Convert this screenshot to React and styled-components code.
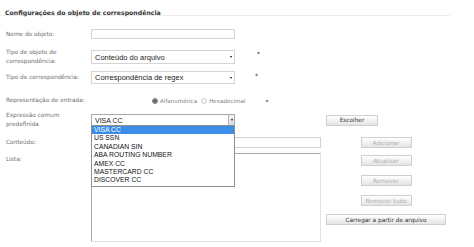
import React from 'react';
import styled, { createGlobalStyle } from 'styled-components';

const GlobalStyle = createGlobalStyle`
  body {
    margin: 0;
    background: #ffffff;
  }
`;

const Page = styled.div`
  width: 474px;
  height: 247px;
  position: relative;
  font-family: "DejaVu Sans", Tahoma, sans-serif;
  color: #707070;
  overflow: hidden;
`;

const Header = styled.div`
  width: 450px;
  height: 16px;
  box-sizing: border-box;
  padding: 9px 0 0 5px;
  border-bottom: 1px solid #ececec;
  font-size: 6.2px;
  line-height: 7px;
  font-weight: bold;
  color: #333333;
`;

const Form = styled.div`
  padding-left: 6px;
`;

const Row = styled.div`
  display: flex;
  align-items: ${p => p.$align || 'center'};
  margin-top: ${p => p.$mt}px;
`;

const Label = styled.div`
  width: 85px;
  flex: none;
  font-size: 5.8px;
  line-height: 9px;
  padding-top: ${p => p.$pt || 0}px;
`;

const TextInput = styled.div`
  width: ${p => p.$w}px;
  height: ${p => p.$h}px;
  box-sizing: border-box;
  border: 1px solid #d4d4d4;
  background: #ffffff;
`;

const SelectBox = styled.div`
  position: relative;
  width: 144px;
  height: ${p => p.$h}px;
  box-sizing: border-box;
  border: 1px solid ${p => (p.$open ? '#a9a9a9' : '#d4d4d4')};
  background: #ffffff;
  display: flex;
  align-items: center;
  padding-left: 3px;
  font-family: "Liberation Sans", Arial, sans-serif;
  font-size: ${p => (p.$open ? 7 : 7.5)}px;
  color: #222222;
`;

const SelectValue = styled.span`
  flex: 1;
  white-space: nowrap;
`;

const Caret = styled.span`
  width: 0;
  height: 0;
  border-left: 1.6px solid transparent;
  border-right: 1.6px solid transparent;
  border-top: 2.4px solid #111111;
  margin-right: ${p => (p.$flush ? 0 : 2)}px;
`;

const CaretButton = styled.span`
  width: 5px;
  align-self: stretch;
  display: flex;
  align-items: center;
  justify-content: center;
  background: linear-gradient(#f4f4f4, #dcdcdc);
  border-left: 1px solid #b5b5b5;
`;

const DropList = styled.ul`
  position: absolute;
  left: -1px;
  top: 10px;
  width: 144px;
  box-sizing: border-box;
  margin: 0;
  padding: 0 0 1px;
  list-style: none;
  background: #ffffff;
  border: 1px solid #8f8f8f;
  z-index: 5;
`;

const DropItem = styled.li`
  height: 8.4px;
  line-height: 8.4px;
  padding-left: 2px;
  font-family: "Liberation Sans", Arial, sans-serif;
  font-size: 6.8px;
  color: ${p => (p.$active ? '#ffffff' : '#111111')};
  background: ${p => (p.$active ? '#3a8ee6' : 'transparent')};
  white-space: nowrap;
`;

const Required = styled.span`
  font-size: 6px;
  line-height: 6px;
  color: #111111;
  margin-left: ${p => p.$ml}px;
  margin-top: ${p => p.$mt || 3}px;
  align-self: flex-start;
`;

const RadioGroup = styled.div`
  display: flex;
  align-items: center;
  margin-left: 61px;
  font-size: 5.6px;
  color: #808080;
`;

const Radio = styled.span`
  width: 4px;
  height: 4px;
  border-radius: 50%;
  border: 0.8px solid ${p => (p.$on ? '#777777' : '#cfcfcf')};
  background: ${p => (p.$on ? 'radial-gradient(#555 45%, #bbb 70%)' : '#fafafa')};
  margin-right: 2px;
  margin-left: ${p => p.$ml || 0}px;
`;

const Button = styled.div`
  width: ${p => p.$w}px;
  height: 11px;
  box-sizing: border-box;
  border: 1px solid #cfcfcf;
  background: linear-gradient(#ffffff, #e4e4e4);
  display: flex;
  align-items: center;
  justify-content: center;
  font-size: 5.8px;
  color: ${p => (p.$disabled ? '#b0b0b0' : '#333333')};
  margin-left: ${p => p.$ml || 0}px;
  margin-top: ${p => p.$mt || 0}px;
`;

const Lower = styled.div`
  display: flex;
  margin-top: 8px;
`;

const LeftColumn = styled.div`
  width: 315px;
`;

const ButtonColumn = styled.div`
  width: 120px;
  margin-left: 5px;
  display: flex;
  flex-direction: column;
  align-items: center;
`;

const ListBox = styled.div`
  width: 230px;
  height: 89px;
  box-sizing: border-box;
  border: 1px solid #e2e2e2;
  border-left-color: #a8a8a8;
  border-top-color: #a8a8a8;
  background: #ffffff;
`;

const options = [
  'VISA CC',
  'US SSN',
  'CANADIAN SIN',
  'ABA ROUTING NUMBER',
  'AMEX CC',
  'MASTERCARD CC',
  'DISCOVER CC'
];

const App = () => (
  <Page>
    <GlobalStyle />
    <Header>Configurações do objeto de correspondência</Header>
    <Form>
      <Row $mt={13}>
        <Label>Nome do objeto:</Label>
        <TextInput $w={144} $h={10} />
      </Row>

      <Row $mt={9}>
        <Label>
          Tipo de objeto de
          <br />
          correspondência:
        </Label>
        <SelectBox $h={14}>
          <SelectValue>Conteúdo do arquivo</SelectValue>
          <Caret />
        </SelectBox>
        <Required $ml={22}>*</Required>
      </Row>

      <Row $mt={5}>
        <Label>Tipo de correspondência:</Label>
        <SelectBox $h={13}>
          <SelectValue>Correspondência de regex</SelectValue>
          <Caret />
        </SelectBox>
        <Required $ml={20} $mt={2}>*</Required>
      </Row>

      <Row $mt={12}>
        <Label>Representação de entrada:</Label>
        <RadioGroup>
          <Radio $on />
          Alfanumérica
          <Radio $ml={4} />
          Hexadecimal
        </RadioGroup>
        <Required $ml={20} $mt={0}>*</Required>
      </Row>

      <Row $mt={6}>
        <Label>
          Expressão comum
          <br />
          predefinida
        </Label>
        <SelectBox $h={12} $open>
          <SelectValue>VISA CC</SelectValue>
          <CaretButton>
            <Caret $flush />
          </CaretButton>
          <DropList>
            {options.map((o, i) => (
              <DropItem key={o} $active={i === 0}>
                {o}
              </DropItem>
            ))}
          </DropList>
        </SelectBox>
        <Button $w={52} $ml={91}>
          Escolher
        </Button>
      </Row>

      <Lower>
        <LeftColumn>
          <Row>
            <Label>Conteúdo:</Label>
            <TextInput $w={230} $h={11} />
          </Row>
          <Row $mt={5} $align="flex-start">
            <Label $pt={2}>Lista:</Label>
            <ListBox />
          </Row>
        </LeftColumn>
        <ButtonColumn>
          <Button $w={51} $disabled>Adicionar</Button>
          <Button $w={51} $mt={7} $disabled>Atualizar</Button>
          <Button $w={51} $mt={9} $disabled>Remover</Button>
          <Button $w={51} $mt={9} $disabled>Remover tudo</Button>
          <Button $w={120} $mt={8}>Carregar a partir de arquivo</Button>
        </ButtonColumn>
      </Lower>
    </Form>
  </Page>
);

export default App;
